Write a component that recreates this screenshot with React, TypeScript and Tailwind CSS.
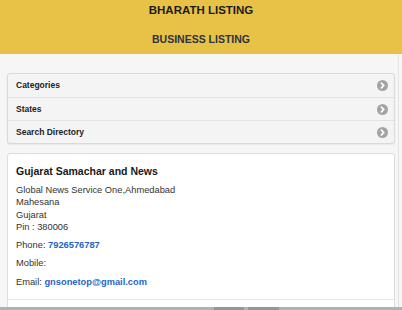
import React from "react";

function Arrow() {
  return (
    <svg width="11" height="11" viewBox="0 0 11 11" className="shrink-0">
      <circle cx="5.5" cy="5.5" r="5.5" fill="#a3a3a3" />
      <path d="M4.4 3.1 L6.8 5.5 L4.4 7.9" fill="none" stroke="#ffffff" strokeWidth="1.7" strokeLinecap="round" strokeLinejoin="round" />
    </svg>
  );
}

export default function App() {
  const rows = ["Categories", "States", "Search Directory"];
  return (
    <div className="w-[402px] h-[310px] overflow-hidden bg-[#f6f6f6] flex flex-col font-['Liberation_Sans',Arial,sans-serif]">
      <header className="bg-[#e7c247] h-[54px] shrink-0 flex flex-col items-center">
        <div className="h-[22px] flex items-center text-[11.5px] font-bold text-[#1c1c1c]">BHARATH LISTING</div>
        <div className="h-[32px] pt-[4px] flex items-center text-[10.5px] font-bold text-[#2e3340]">BUSINESS LISTING</div>
      </header>
      <main className="flex-1 overflow-hidden mr-[3px] border-r border-[#e4e4e4] pl-[7px] pr-[3px] pt-[19px]">
        <div className="border border-[#d9d9d9] rounded-[3px] bg-[#f4f4f4] shadow-[0_1px_2px_rgba(0,0,0,0.06)]">
          {rows.map((r, i) => (
            <div
              key={r}
              className={
                i === 0
                  ? "h-[23px] flex items-center justify-between pl-[8px] pr-[6px] pb-[1px]"
                  : "h-[23px] flex items-center justify-between pl-[8px] pr-[6px] border-t border-[#e2e2e2]"
              }
            >
              <span className="text-[8.5px] font-bold text-[#222]">{r}</span>
              <Arrow />
            </div>
          ))}
        </div>
        <div className="mt-[9px] border border-[#dedede] rounded-t-[3px] bg-white">
          <div className="pl-[8px] pt-[10px] pb-[11px] border-b border-[#e8e8e8]">
            <div className="text-[10.5px] leading-[14px] font-bold text-[#1a1a1a]">Gujarat Samachar and News</div>
            <div className="mt-[6px] text-[9.3px] leading-[12.3px] text-[#333]">
              Global News Service One,Ahmedabad
              <br />
              Mahesana
              <br />
              Gujarat
              <br />
              Pin : 380006
            </div>
            <div className="mt-[6px] text-[9.3px] leading-[12.3px] text-[#333]">
              Phone: <a className="font-bold text-[#1f66c8]">7926576787</a>
            </div>
            <div className="mt-[6px] text-[9.3px] leading-[12.3px] text-[#333]">Mobile:</div>
            <div className="mt-[6px] text-[9.3px] leading-[12.3px] text-[#333]">
              Email: <a className="font-bold text-[#1f66c8]">gnsonetop@gmail.com</a>
            </div>
          </div>
          <div className="h-[20px]" />
        </div>
      </main>
      <footer className="h-[3px] shrink-0 bg-[#aeb2b6] flex">
        <div className="w-[214px]" />
        <div className="w-[30px] bg-[#93979b]" />
        <div className="w-[4px]" />
        <div className="w-[31px] bg-[#93979b]" />
      </footer>
    </div>
  );
}
